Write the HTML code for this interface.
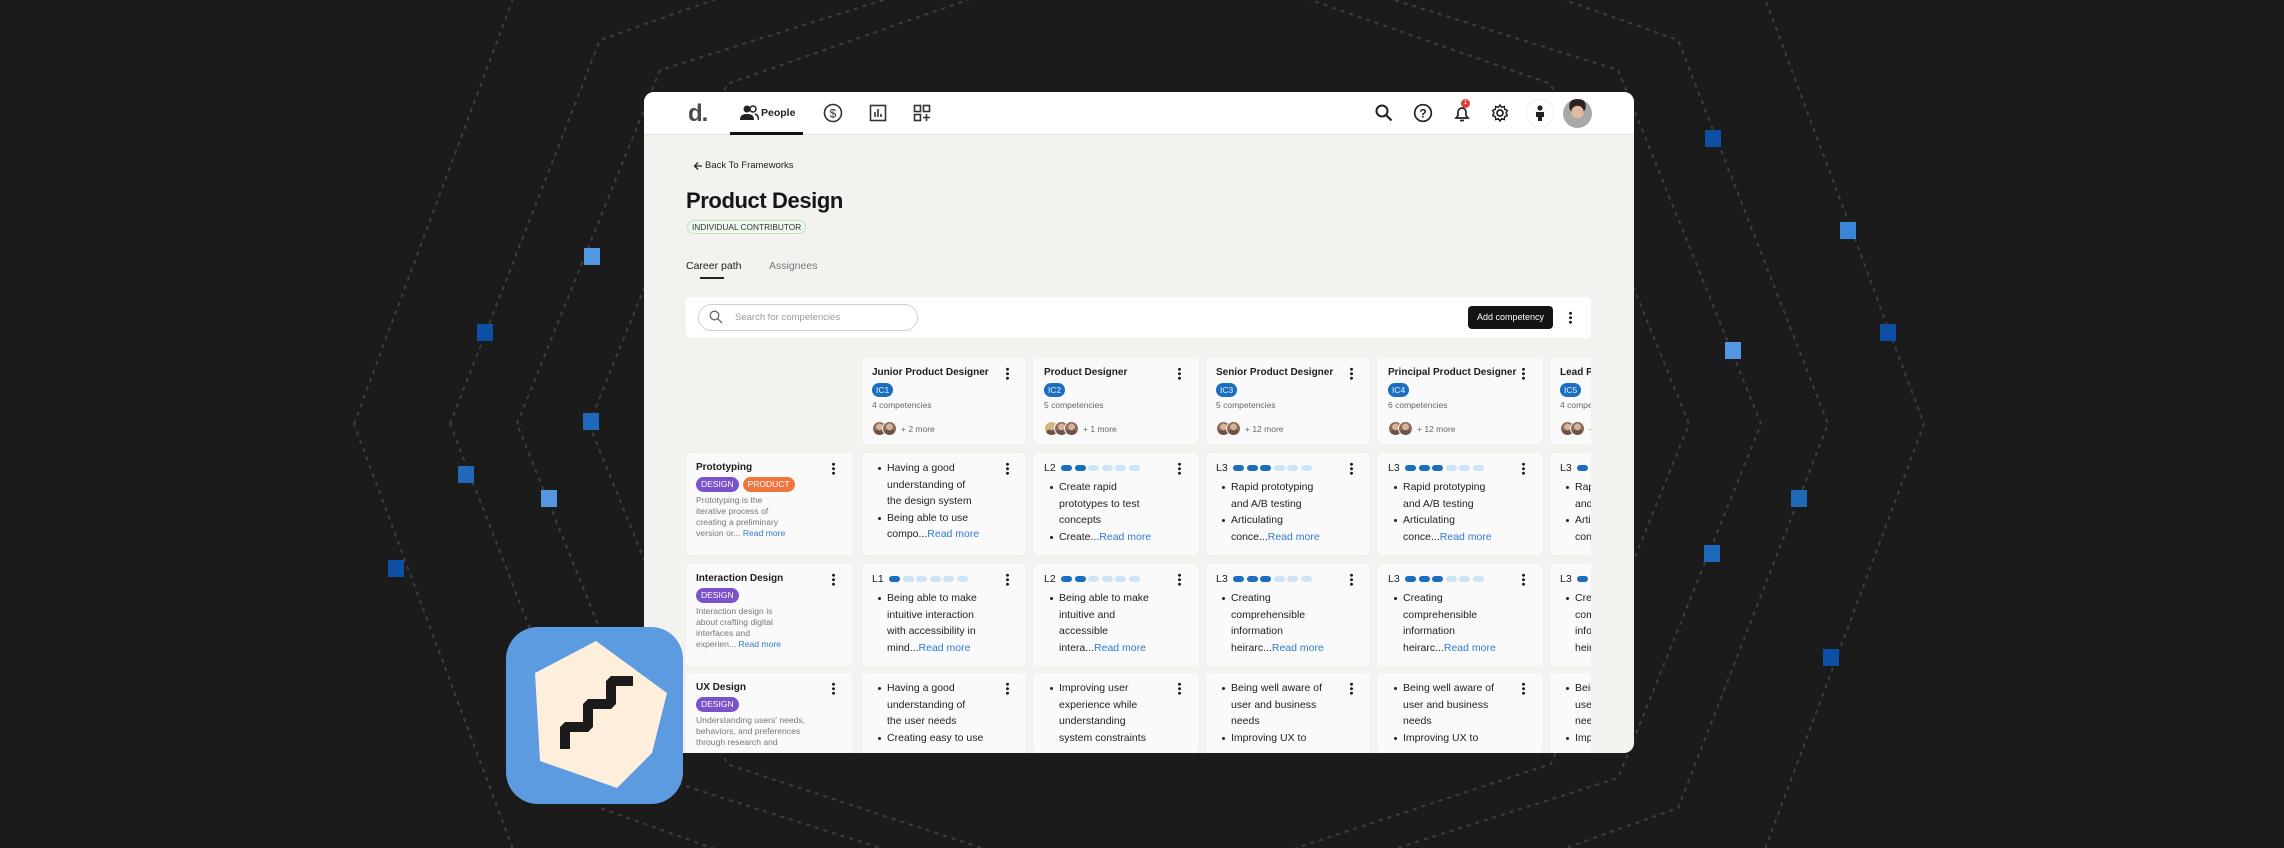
<!DOCTYPE html>
<html><head><meta charset="utf-8">
<style>
*{box-sizing:border-box;margin:0;padding:0}
html,body{width:2284px;height:848px;overflow:hidden}
body{background:#1b1b1b;position:relative;font-family:"Liberation Sans",Arial,sans-serif;color:#1d1d1d}
.abs{position:absolute}
.sq{position:absolute;width:16px;height:17px}
.win{position:absolute;left:644px;top:92px;width:990px;height:661px;background:#f3f2ef;border-radius:10px;overflow:hidden}
.nav{position:absolute;left:0;top:0;width:990px;height:43px;background:#fff;border-bottom:1px solid #e4e4e4}
.ico{position:absolute;top:11px;width:20px;height:20px}
.card{position:absolute;background:#fafafa;border-radius:4px;width:164px;overflow:hidden}
.keb{position:absolute;right:17px;top:9px;width:3px;height:13px;background:radial-gradient(circle,#222 1.4px,transparent 1.6px) 0 0/3px 4.5px repeat-y}
.ht{position:absolute;left:10px;top:9px;font-size:10px;font-weight:bold;white-space:nowrap}
.ic{position:absolute;left:10px;top:25px;height:14px;padding:0 4px;border-radius:7px;background:#1c6fc0;color:#e6f0fb;font-size:8.5px;line-height:14px}
.cnt{position:absolute;left:10px;top:42px;font-size:8.5px;color:#666;white-space:nowrap}
.avs{position:absolute;left:10px;top:63px;height:15px;display:flex;align-items:center;font-size:8.5px;color:#666;white-space:nowrap}
.av{width:15px;height:15px;border-radius:50%;border:1.5px solid #fafafa;margin-right:-5px;background:radial-gradient(circle at 50% 38%,#d9b29a 0 3.2px,transparent 3.5px),radial-gradient(circle at 50% 100%,#6e5246 0 6px,transparent 6.3px),#8c6c5c}
.lv{position:absolute;left:10px;top:8px;height:14px;display:flex;align-items:center;font-size:10.5px;white-space:nowrap}
.lv i{display:inline-block;width:11px;height:6px;border-radius:3px;background:#cfe3f6;margin-left:2.5px}
.lv i.f{background:#1c6fc0}
.lv b{font-weight:normal;margin-right:3px}
ul{position:absolute;left:16px;list-style:none;font-size:10.5px;line-height:16.6px;white-space:nowrap;color:#222}
ul li{position:relative;padding-left:9px}
ul li:before{content:"";position:absolute;left:0;top:7px;width:3px;height:3px;border-radius:50%;background:#222}
.rm{color:#2f7bcf}
.lt{position:absolute;left:10px;top:9px;font-size:10px;font-weight:bold}
.tags{position:absolute;left:10px;top:24px;display:flex;gap:4px}
.tag{height:15px;padding:0 5px;border-radius:8px;font-size:8.5px;line-height:15px;color:#fff}
.dsg{background:#7a52cc}
.prd{background:#f07640}
.desc{position:absolute;left:10px;top:42px;font-size:8.6px;line-height:11px;color:#777;white-space:nowrap}
</style></head><body>
<svg class="abs" style="left:0;top:0" width="2284" height="848">
<g fill="none" stroke="#4a4a4a" stroke-width="2" stroke-dasharray="4 5" opacity="0.75">
<polygon points="354,424 520,-20 1139,-250 1758,-20 1924,424 1758,868 1139,1100 520,868"/>
<polygon points="450,424 600,40 1139,-150 1678,40 1828,424 1678,808 1139,1000 600,808"/>
<polygon points="517,424 660,70 1139,-80 1618,70 1761,424 1618,778 1139,930 660,778"/>
<polygon points="589,424 727,84 1139,-60 1551,84 1689,424 1551,764 1139,900 727,764"/>
</g></svg>
<div class="sq" style="left:584px;top:248px;background:#5596e0"></div>
<div class="sq" style="left:477px;top:324px;background:#0e4fa6"></div>
<div class="sq" style="left:583px;top:413px;background:#1f6ab8"></div>
<div class="sq" style="left:458px;top:466px;background:#1f6ab8"></div>
<div class="sq" style="left:541px;top:490px;background:#5596e0"></div>
<div class="sq" style="left:388px;top:560px;background:#0e4fa6"></div>
<div class="sq" style="left:1705px;top:130px;background:#0e4fa6"></div>
<div class="sq" style="left:1840px;top:222px;background:#3a86d6"></div>
<div class="sq" style="left:1725px;top:342px;background:#5596e0"></div>
<div class="sq" style="left:1880px;top:324px;background:#0e4fa6"></div>
<div class="sq" style="left:1791px;top:490px;background:#1f6ab8"></div>
<div class="sq" style="left:1704px;top:545px;background:#1f6ab8"></div>
<div class="sq" style="left:1823px;top:649px;background:#0e4fa6"></div>

<div class="win">
 <div class="nav">
  <div class="abs" style="left:44px;top:8px;font-size:24px;font-weight:bold;color:#4a4a4a;letter-spacing:-1px">d.</div>
  <svg class="abs" style="left:96px;top:13px" width="19" height="16" viewBox="0 0 19 16"><circle cx="7" cy="4" r="3.5" fill="#222"/><path d="M0 15c0-5 3-6 7-6s7 1 7 6z" fill="#222"/><circle cx="13" cy="4" r="3" fill="none" stroke="#222" stroke-width="1.5"/><path d="M15 9c2 .5 3.5 2 3.5 6" stroke="#222" stroke-width="1.5" fill="none"/></svg>
  <div class="abs" style="left:117px;top:15px;font-size:10.5px;font-weight:bold;color:#222">People</div>
  <div class="abs" style="left:86px;top:40px;width:73px;height:3px;background:#111"></div>
  <svg class="ico" style="left:179px" viewBox="0 0 20 20"><circle cx="10" cy="10" r="8.5" fill="none" stroke="#333" stroke-width="1.6"/><text x="10" y="14.5" font-size="12" text-anchor="middle" fill="#333" font-family="Liberation Sans">$</text></svg>
  <svg class="ico" style="left:224px" viewBox="0 0 20 20"><rect x="2.5" y="2.5" width="15" height="15" fill="none" stroke="#333" stroke-width="1.6"/><path d="M7 14V9M10 14V6M13 14v-3" stroke="#333" stroke-width="1.6"/></svg>
  <svg class="ico" style="left:268px" viewBox="0 0 20 20"><g fill="none" stroke="#333" stroke-width="1.6"><rect x="2.5" y="2.5" width="6" height="6"/><rect x="11.5" y="2.5" width="6" height="6"/><rect x="2.5" y="11.5" width="6" height="6"/><path d="M14.5 11v7M11 14.5h7"/></g></svg>
  <svg class="ico" style="left:730px" viewBox="0 0 20 20"><circle cx="8" cy="8" r="5.5" fill="none" stroke="#222" stroke-width="2"/><path d="M12 12l5.5 5.5" stroke="#222" stroke-width="2.2"/></svg>
  <svg class="ico" style="left:769px" viewBox="0 0 20 20"><circle cx="10" cy="10" r="8.3" fill="none" stroke="#222" stroke-width="1.7"/><text x="10" y="14.3" font-size="12" font-weight="bold" text-anchor="middle" fill="#222" font-family="Liberation Sans">?</text></svg>
  <svg class="ico" style="left:808px" viewBox="0 0 20 20"><path d="M4 15h12l-2-2.5V9a4 4 0 0 0-8 0v3.5z" fill="none" stroke="#222" stroke-width="1.7"/><path d="M8 17.5h4" stroke="#222" stroke-width="1.7"/></svg>
  <div class="abs" style="left:817px;top:7px;width:9px;height:9px;border-radius:50%;background:#e03a3a;color:#fff;font-size:6px;line-height:9px;text-align:center">1</div>
  <svg class="ico" style="left:846px" viewBox="0 0 20 20"><circle cx="10" cy="10" r="3" fill="none" stroke="#222" stroke-width="1.7"/><path d="M10 2l1.6 2.3 2.7-.8.4 2.8 2.6 1.1-1.2 2.6 1.2 2.6-2.6 1.1-.4 2.8-2.7-.8L10 18l-1.6-2.3-2.7.8-.4-2.8-2.6-1.1L3.9 10 2.7 7.4l2.6-1.1.4-2.8 2.7.8z" fill="none" stroke="#222" stroke-width="1.5"/></svg>
  <div class="abs" style="left:882px;top:7px;width:28px;height:28px;border-radius:50%;background:#fff;border:1px solid #eee"></div>
  <svg class="abs" style="left:889px;top:13px" width="14" height="16" viewBox="0 0 14 16"><circle cx="7" cy="3" r="2.6" fill="#222"/><path d="M3 7h8v5H9v4H5v-4H3z" fill="#222"/></svg>
  <div class="abs" style="left:919px;top:7px;width:29px;height:29px;border-radius:50%;background:radial-gradient(circle at 50% 45%,#e2bba3 0 6px,transparent 6.5px),radial-gradient(circle at 50% 25%,#2b2522 0 8px,transparent 8.5px),#a8a8a8"></div>
 </div>

 <svg class="abs" style="left:49px;top:69px" width="10" height="10" viewBox="0 0 10 10"><path d="M9 5H1.5M5 1.5L1.5 5 5 8.5" fill="none" stroke="#222" stroke-width="1.3"/></svg>
 <div class="abs" style="left:61px;top:68px;font-size:9.5px;color:#222">Back To Frameworks</div>
 <div class="abs" style="left:42px;top:96px;font-size:22px;font-weight:bold;color:#161616;letter-spacing:-0.4px">Product Design</div>
 <div class="abs" style="left:43px;top:128px;height:14px;padding:0 4px;border:1px solid #bfe3bf;background:#eef9ee;border-radius:7px;font-size:8.3px;line-height:12px;color:#333">INDIVIDUAL CONTRIBUTOR</div>
 <div class="abs" style="left:42px;top:168px;font-size:10.5px;color:#222">Career path</div>
 <div class="abs" style="left:125px;top:168px;font-size:10.5px;color:#777">Assignees</div>
 <div class="abs" style="left:56px;top:185px;width:24px;height:2px;background:#222"></div>

 <div class="abs" style="left:42px;top:205px;width:905px;height:41px;background:#fff;border-radius:4px">
  <div class="abs" style="left:12px;top:7px;width:220px;height:27px;border:1px solid #cfcfcf;border-radius:14px"></div>
  <svg class="abs" style="left:23px;top:13px" width="14" height="14" viewBox="0 0 14 14"><circle cx="5.5" cy="5.5" r="4.3" fill="none" stroke="#666" stroke-width="1.3"/><path d="M8.7 8.7L13 13" stroke="#666" stroke-width="1.3"/></svg>
  <div class="abs" style="left:49px;top:15px;font-size:9.5px;color:#999">Search for competencies</div>
  <div class="abs" style="left:782px;top:9px;width:85px;height:23px;background:#141414;border-radius:4px;color:#fff;font-size:9px;line-height:23px;text-align:center">Add competency</div>
  <div class="keb" style="left:883px;right:auto;top:14px"></div>
 </div>

 <div class="abs" style="left:42px;top:266px;width:905px;height:395px;overflow:hidden">
  <div class="card" style="left:176px;top:0;height:86px"><div class="ht">Junior Product Designer</div><div class="keb"></div><div class="ic">IC1</div><div class="cnt">4 competencies</div><div class="avs"><span class="av"></span><span class="av"></span><span style="margin-left:9px">+ 2 more</span></div></div>
  <div class="card" style="left:348px;top:0;height:86px"><div class="ht">Product Designer</div><div class="keb"></div><div class="ic">IC2</div><div class="cnt">5 competencies</div><div class="avs"><span class="av" style="background-color:#c9c06a"></span><span class="av"></span><span class="av"></span><span style="margin-left:9px">+ 1 more</span></div></div>
  <div class="card" style="left:520px;top:0;height:86px"><div class="ht">Senior Product Designer</div><div class="keb"></div><div class="ic">IC3</div><div class="cnt">5 competencies</div><div class="avs"><span class="av"></span><span class="av"></span><span style="margin-left:9px">+ 12 more</span></div></div>
  <div class="card" style="left:692px;top:0;height:86px"><div class="ht">Principal Product Designer</div><div class="keb"></div><div class="ic">IC4</div><div class="cnt">6 competencies</div><div class="avs"><span class="av"></span><span class="av"></span><span style="margin-left:9px">+ 12 more</span></div></div>
  <div class="card" style="left:864px;top:0;height:86px"><div class="ht">Lead Product Designer</div><div class="ic">IC5</div><div class="cnt">4 competencies</div><div class="avs"><span class="av"></span><span class="av"></span><span style="margin-left:9px">+ 3 more</span></div></div>

  <div class="card" style="left:0;top:95px;height:102px;width:166px"><div class="lt">Prototyping</div><div class="keb"></div><div class="tags"><span class="tag dsg">DESIGN</span><span class="tag prd">PRODUCT</span></div><div class="desc">Prototyping is the<br>iterative process of<br>creating a preliminary<br>version or... <span class="rm">Read more</span></div></div>
  <div class="card" style="left:176px;top:95px;height:102px"><div class="keb"></div><ul style="top:7px"><li>Having a good<br>understanding of<br>the design system</li><li>Being able to use<br>compo...<span class="rm">Read more</span></li></ul></div>
  <div class="card" style="left:348px;top:95px;height:102px"><div class="lv"><b>L2</b><i class="f"></i><i class="f"></i><i></i><i></i><i></i><i></i></div><div class="keb"></div><ul style="top:26px"><li>Create rapid<br>prototypes to test<br>concepts</li><li>Create...<span class="rm">Read more</span></li></ul></div>
  <div class="card" style="left:520px;top:95px;height:102px"><div class="lv"><b>L3</b><i class="f"></i><i class="f"></i><i class="f"></i><i></i><i></i><i></i></div><div class="keb"></div><ul style="top:26px"><li>Rapid prototyping<br>and A/B testing</li><li>Articulating<br>conce...<span class="rm">Read more</span></li></ul></div>
  <div class="card" style="left:692px;top:95px;height:102px"><div class="lv"><b>L3</b><i class="f"></i><i class="f"></i><i class="f"></i><i></i><i></i><i></i></div><div class="keb"></div><ul style="top:26px"><li>Rapid prototyping<br>and A/B testing</li><li>Articulating<br>conce...<span class="rm">Read more</span></li></ul></div>
  <div class="card" style="left:864px;top:95px;height:102px"><div class="lv"><b>L3</b><i class="f"></i><i class="f"></i><i class="f"></i><i></i><i></i><i></i></div><ul style="top:26px"><li>Rapid prototyping<br>and A/B testing</li><li>Articulating<br>conce...</li></ul></div>

  <div class="card" style="left:0;top:206px;height:102px;width:166px"><div class="lt">Interaction Design</div><div class="keb"></div><div class="tags"><span class="tag dsg">DESIGN</span></div><div class="desc">Interaction design is<br>about crafting digital<br>interfaces and<br>experien... <span class="rm">Read more</span></div></div>
  <div class="card" style="left:176px;top:206px;height:102px"><div class="lv"><b>L1</b><i class="f"></i><i></i><i></i><i></i><i></i><i></i></div><div class="keb"></div><ul style="top:26px"><li>Being able to make<br>intuitive interaction<br>with accessibility in<br>mind...<span class="rm">Read more</span></li></ul></div>
  <div class="card" style="left:348px;top:206px;height:102px"><div class="lv"><b>L2</b><i class="f"></i><i class="f"></i><i></i><i></i><i></i><i></i></div><div class="keb"></div><ul style="top:26px"><li>Being able to make<br>intuitive and<br>accessible<br>intera...<span class="rm">Read more</span></li></ul></div>
  <div class="card" style="left:520px;top:206px;height:102px"><div class="lv"><b>L3</b><i class="f"></i><i class="f"></i><i class="f"></i><i></i><i></i><i></i></div><div class="keb"></div><ul style="top:26px"><li>Creating<br>comprehensible<br>information<br>heirarc...<span class="rm">Read more</span></li></ul></div>
  <div class="card" style="left:692px;top:206px;height:102px"><div class="lv"><b>L3</b><i class="f"></i><i class="f"></i><i class="f"></i><i></i><i></i><i></i></div><div class="keb"></div><ul style="top:26px"><li>Creating<br>comprehensible<br>information<br>heirarc...<span class="rm">Read more</span></li></ul></div>
  <div class="card" style="left:864px;top:206px;height:102px"><div class="lv"><b>L3</b><i class="f"></i><i class="f"></i><i class="f"></i><i></i><i></i><i></i></div><ul style="top:26px"><li>Creating<br>comprehensible<br>information<br>heirarc...</li></ul></div>

  <div class="card" style="left:0;top:315px;height:80px;width:166px"><div class="lt">UX Design</div><div class="keb"></div><div class="tags"><span class="tag dsg">DESIGN</span></div><div class="desc">Understanding users' needs,<br>behaviors, and preferences<br>through research and</div></div>
  <div class="card" style="left:176px;top:315px;height:80px"><div class="keb"></div><ul style="top:7px"><li>Having a good<br>understanding of<br>the user needs</li><li>Creating easy to use</li></ul></div>
  <div class="card" style="left:348px;top:315px;height:80px"><div class="keb"></div><ul style="top:7px"><li>Improving user<br>experience while<br>understanding<br>system constraints</li></ul></div>
  <div class="card" style="left:520px;top:315px;height:80px"><div class="keb"></div><ul style="top:7px"><li>Being well aware of<br>user and business<br>needs</li><li>Improving UX to</li></ul></div>
  <div class="card" style="left:692px;top:315px;height:80px"><div class="keb"></div><ul style="top:7px"><li>Being well aware of<br>user and business<br>needs</li><li>Improving UX to</li></ul></div>
  <div class="card" style="left:864px;top:315px;height:80px"><ul style="top:7px"><li>Being well aware of<br>user and business<br>needs</li><li>Improving UX to</li></ul></div>
 </div>
</div>

<svg class="abs" style="left:505px;top:627px" width="179" height="178" viewBox="505 627 179 178">
 <rect x="506" y="627" width="177" height="177" rx="32" fill="#5c9be0"/>
 <polygon points="596,641 667,693 652,753 617,788 540,761 535,673" fill="#fdefdc"/>
 <polyline points="565,749 565,727 588,727 588,704 611,704 611,681 633,681" fill="none" stroke="#1b1b1b" stroke-width="10" stroke-linejoin="bevel"/>
</svg>
</body></html>
